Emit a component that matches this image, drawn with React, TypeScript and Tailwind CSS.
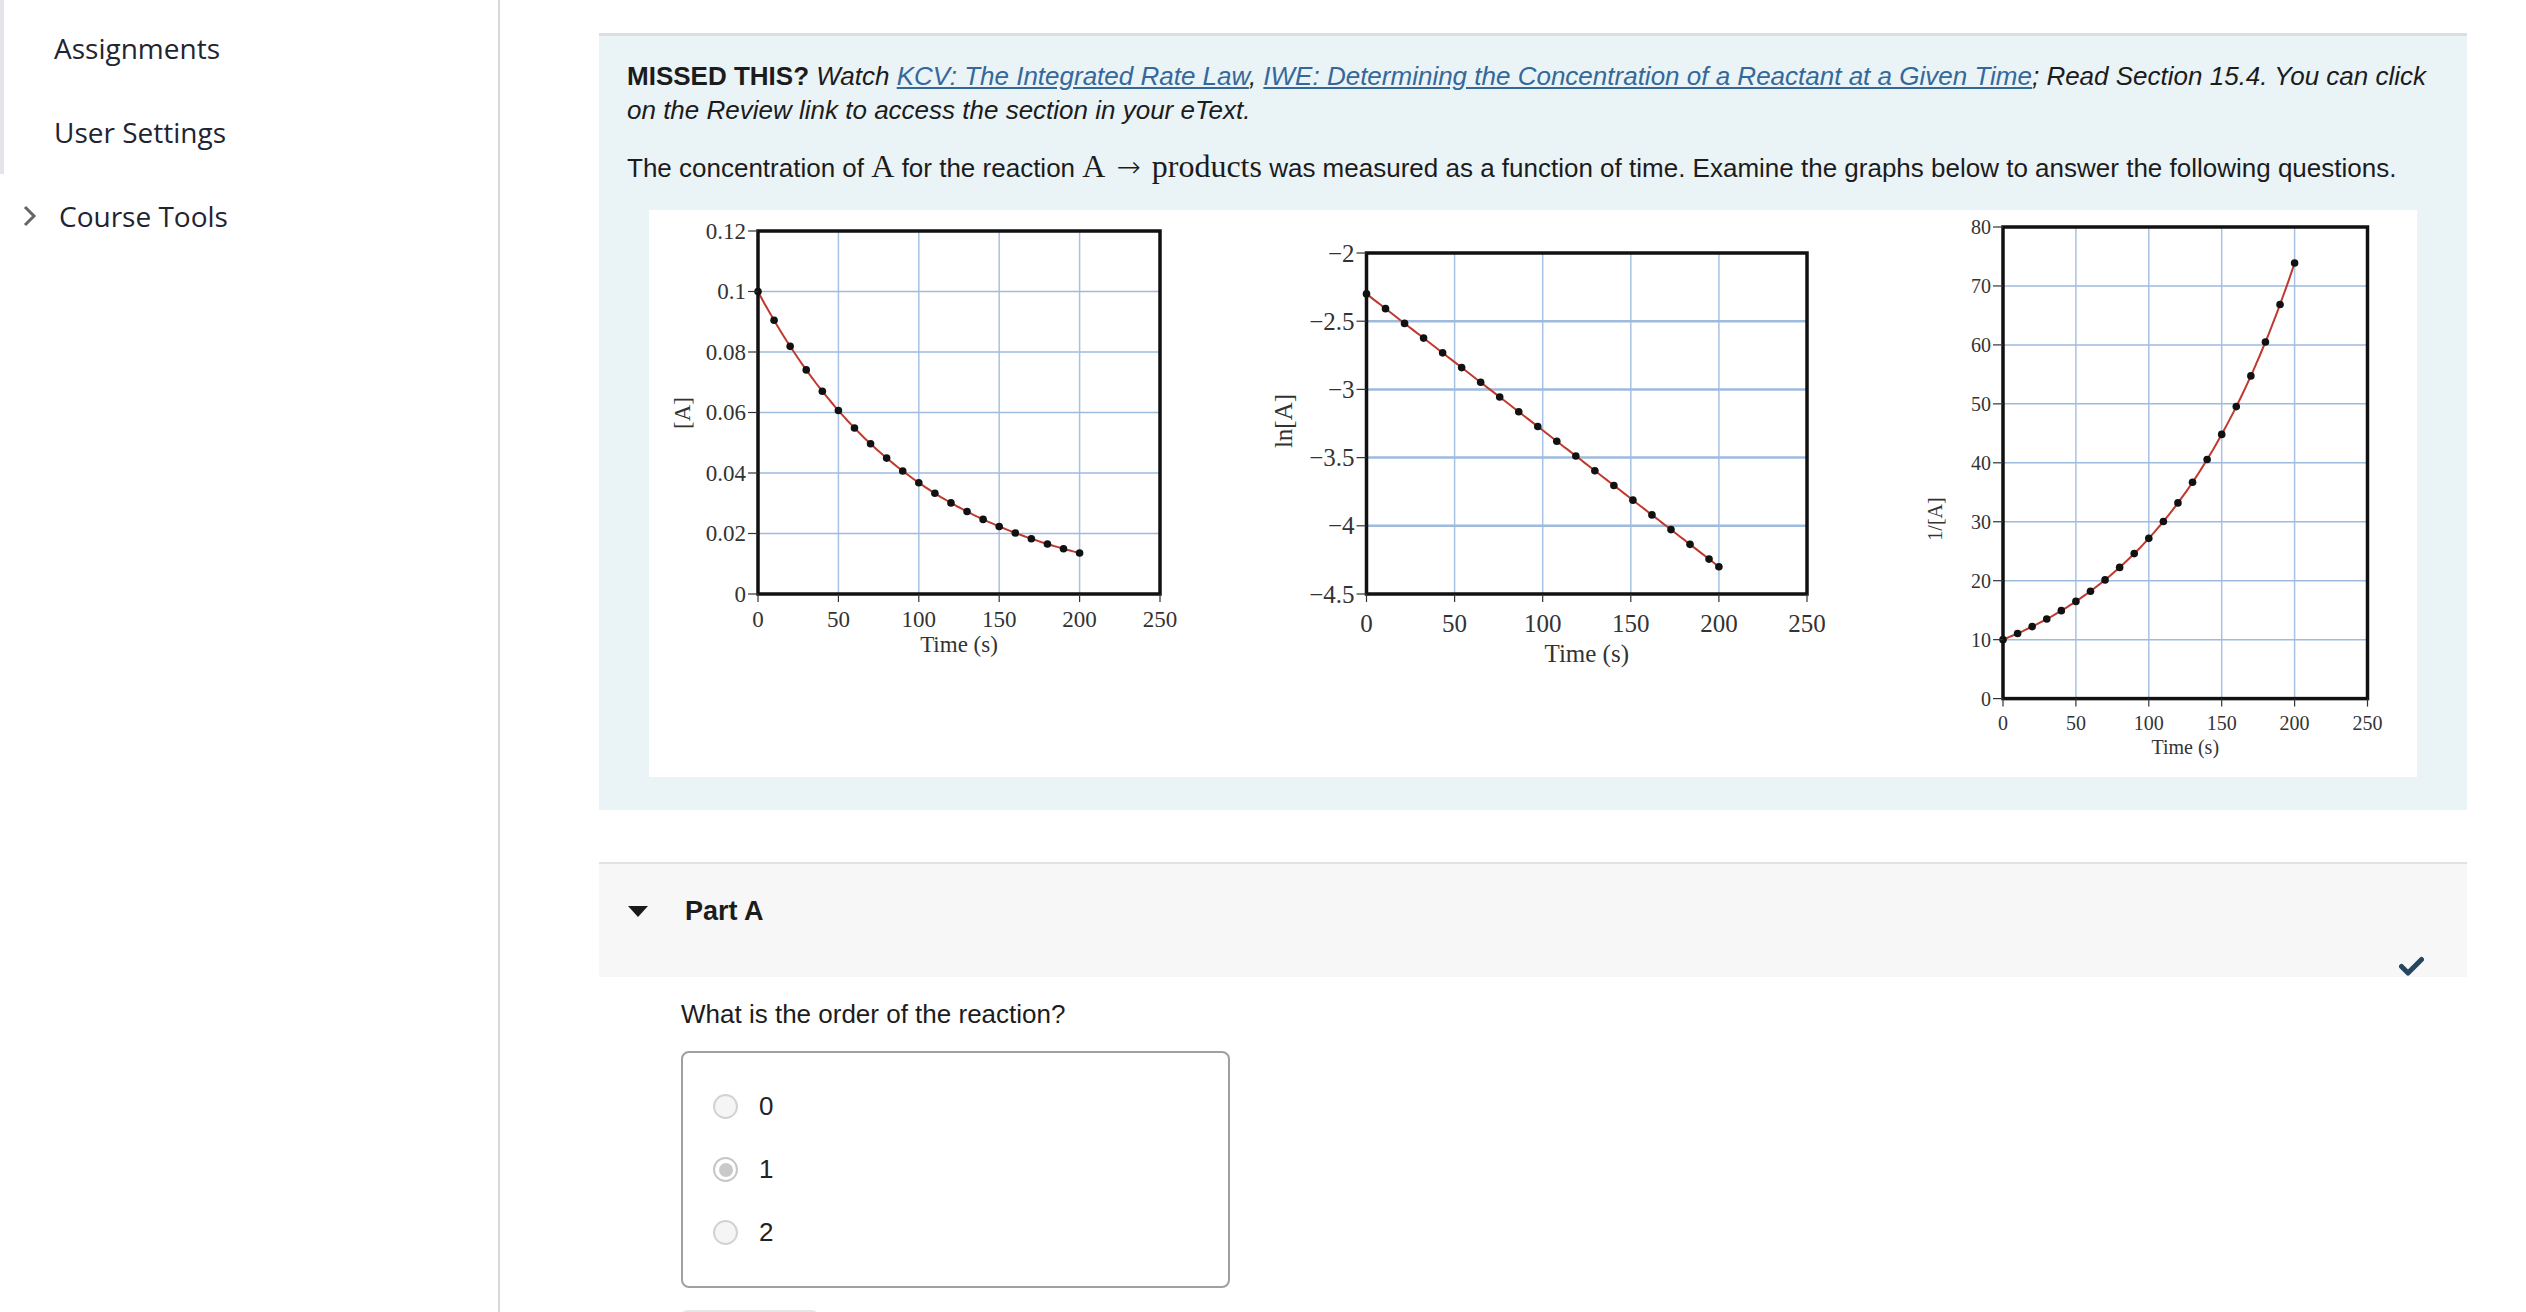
import React from "react";

interface Tick {
  v: number;
  s: string;
}

interface GraphProps {
  w: number;
  h: number;
  l: number;
  r: number;
  t: number;
  b: number;
  ymin: number;
  ymax: number;
  yticks: Tick[];
  pts: number[];
  f: (t: number) => number;
  fs: number;
  ylabel: string;
  ylx: number;
  yly: number;
  xly: number;
  tly: number;
  hgrid: number;
}

const serif = "'Liberation Serif', 'Times New Roman', serif";

function Graph(g: GraphProps) {
  const sx = (t: number) => g.l + (t / 250) * (g.r - g.l);
  const sy = (v: number) => g.b - ((v - g.ymin) / (g.ymax - g.ymin)) * (g.b - g.t);

  // smooth curve through the model function
  const curve: string[] = [];
  for (let t = 0; t <= 200; t += 2) curve.push(`${sx(t).toFixed(1)},${sy(g.f(t)).toFixed(1)}`);

  return (
    <svg width={g.w} height={g.h} className="shrink-0" style={{ fontFamily: serif }}>
      {[50, 100, 150, 200].map((t) => (
        <line key={t} x1={sx(t)} x2={sx(t)} y1={g.t} y2={g.b} stroke="#a7c2e2" strokeWidth={1.5} />
      ))}
      {g.yticks.slice(1, -1).map((k) => (
        <line key={k.s} x1={g.l} x2={g.r} y1={sy(k.v)} y2={sy(k.v)} stroke="#9ebbde" strokeWidth={g.hgrid} />
      ))}
      <polyline points={curve.join(" ")} fill="none" stroke="#c0392f" strokeWidth={2} />
      {g.pts.map((t, i) => (
        <circle key={i} cx={sx(t)} cy={sy(g.f(t))} r={3.8} fill="#111" />
      ))}
      <rect x={g.l} y={g.t} width={g.r - g.l} height={g.b - g.t} fill="none" stroke="#111" strokeWidth={3.5} />
      {g.yticks.map((k) => (
        <g key={k.s}>
          <line x1={g.l - 10} x2={g.l} y1={sy(k.v)} y2={sy(k.v)} stroke="#333" strokeWidth={1.2} />
          <text x={g.l - 12} y={sy(k.v)} fontSize={g.fs} textAnchor="end" dominantBaseline="central" fill="#333">
            {k.s}
          </text>
        </g>
      ))}
      {[0, 50, 100, 150, 200, 250].map((t) => (
        <g key={t}>
          <line x1={sx(t)} x2={sx(t)} y1={g.b} y2={g.b + 8} stroke="#333" strokeWidth={1.2} />
          <text x={sx(t)} y={g.xly} fontSize={g.fs} textAnchor="middle" dominantBaseline="central" fill="#333">
            {t}
          </text>
        </g>
      ))}
      <text x={(g.l + g.r) / 2} y={g.tly} fontSize={g.fs} textAnchor="middle" dominantBaseline="central" fill="#333">
        Time (s)
      </text>
      <text
        x={g.ylx}
        y={g.yly}
        fontSize={g.fs}
        textAnchor="middle"
        dominantBaseline="central"
        fill="#333"
        transform={`rotate(-90 ${g.ylx} ${g.yly})`}
      >
        {g.ylabel}
      </text>
    </svg>
  );
}

const every10 = Array.from({ length: 21 }, (_, i) => i * 10);
const lnPts = [...Array.from({ length: 19 }, (_, i) => i * 10.8), 200];

function Radio({ label, checked }: { label: string; checked?: boolean }) {
  return (
    <div className="flex h-[63px] items-center">
      {checked ? (
        <span className="flex h-[25px] w-[25px] items-center justify-center rounded-full border-2 border-[#c6c6c6] bg-white">
          <span className="h-[14px] w-[14px] rounded-full bg-[#c9c9c9]" />
        </span>
      ) : (
        <span className="h-[25px] w-[25px] rounded-full border-2 border-[#d2d2d2] bg-[#f5f5f5]" />
      )}
      <span className="ml-[21px] text-[26px] text-[#222]">{label}</span>
    </div>
  );
}

export default function App() {
  return (
    <div
      className="flex h-[1312px] w-[2526px] overflow-hidden bg-white"
      style={{ fontFamily: "'Liberation Sans', Arial, sans-serif" }}
    >
      {/* side nav */}
      <aside
        className="w-[500px] shrink-0 border-r-2 border-[#d8d8d8] text-[28px] text-[#1f2430]"
        style={{ fontFamily: "'Open Sans', 'Noto Sans', sans-serif" }}
      >
        <div className="border-l-4 border-[#e4e5e8] pt-[6px]">
          <div className="flex h-[84px] items-center pl-[50px]">Assignments</div>
          <div className="flex h-[84px] items-center pl-[50px]">User Settings</div>
        </div>
        <div className="flex h-[84px] items-center pl-[22px]">
          <svg width="16" height="22" viewBox="0 0 16 22" className="mr-[21px]">
            <path d="M3 2 L12 11 L3 20" fill="none" stroke="#666" strokeWidth="3" />
          </svg>
          Course Tools
        </div>
      </aside>

      {/* main */}
      <main className="flex-1 pl-[99px] pr-[59px] text-[#1c1c1c]">
        <section className="mt-[33px] border-t-[3px] border-[#dcdfe0] bg-[#eaf3f6] px-[28px] pt-[23px] pb-[33px]">
          <p className="text-[26px] leading-[34px]">
            <b>MISSED THIS?</b>{" "}
            <i>
              Watch{" "}
              <a className="text-[#35689a] underline">KCV: The Integrated Rate Law</a>,{" "}
              <a className="text-[#35689a] underline">
                IWE: Determining the Concentration of a Reactant at a Given Time
              </a>
              ; Read Section 15.4. You can click on the Review link to access the section in your eText.
            </i>
          </p>
          <p className="mt-[23px] h-[34px] text-[26px] leading-[34px]">
            The concentration of{" "}
            <span style={{ fontFamily: serif }} className="text-[32px] leading-none">
              A
            </span>{" "}
            for the reaction{" "}
            <span style={{ fontFamily: serif }} className="text-[32px] leading-none">
              A
            </span>
            <span
              style={{ fontFamily: "'DejaVu Sans', sans-serif" }}
              className="mx-[11px] text-[29px] font-light leading-none"
            >
              →
            </span>
            <span style={{ fontFamily: serif }} className="text-[32px] leading-none">
              products
            </span>{" "}
            was measured as a function of time. Examine the graphs below to answer the following questions.
          </p>

          <div className="mx-[22px] mt-[26px] flex h-[567px] bg-white">
            <Graph
              w={580}
              h={567}
              l={109}
              r={511}
              t={21}
              b={384}
              ymin={0}
              ymax={0.12}
              yticks={[
                { v: 0, s: "0" },
                { v: 0.02, s: "0.02" },
                { v: 0.04, s: "0.04" },
                { v: 0.06, s: "0.06" },
                { v: 0.08, s: "0.08" },
                { v: 0.1, s: "0.1" },
                { v: 0.12, s: "0.12" },
              ]}
              pts={every10}
              f={(t) => 0.1 * Math.exp(-0.01 * t)}
              fs={23}
              ylabel="[A]"
              ylx={33}
              yly={203}
              xly={409}
              tly={434}
              hgrid={1.5}
            />
            <Graph
              w={640}
              h={567}
              l={137.5}
              r={578}
              t={43}
              b={384}
              ymin={-4.5}
              ymax={-2}
              yticks={[
                { v: -4.5, s: "−4.5" },
                { v: -4, s: "−4" },
                { v: -3.5, s: "−3.5" },
                { v: -3, s: "−3" },
                { v: -2.5, s: "−2.5" },
                { v: -2, s: "−2" },
              ]}
              pts={lnPts}
              f={(t) => -2.3 - 0.01 * t}
              fs={25}
              ylabel="ln[A]"
              ylx={54}
              yly={211}
              xly={413}
              tly={443}
              hgrid={2.5}
            />
            <Graph
              w={548}
              h={567}
              l={134}
              r={498.5}
              t={17}
              b={488.6}
              ymin={0}
              ymax={80}
              yticks={[0, 10, 20, 30, 40, 50, 60, 70, 80].map((v) => ({ v, s: String(v) }))}
              pts={every10}
              f={(t) => 10 * Math.exp(0.01 * t)}
              fs={20}
              ylabel="1/[A]"
              ylx={66}
              yly={309}
              xly={513}
              tly={537}
              hgrid={1.5}
            />
          </div>
        </section>

        {/* Part A */}
        <section className="relative mt-[52px] h-[115px] border-t-2 border-[#e2e2e2] bg-[#f7f7f7] pl-[29px] pt-[30px]">
          <div className="flex h-[34px] items-center">
            <svg width="20" height="11" viewBox="0 0 20 11">
              <polygon points="0,0 20,0 10,11" fill="#1a1a1a" />
            </svg>
            <span className="ml-[37px] text-[27px] font-bold">Part A</span>
          </div>
          <svg width="25" height="20" viewBox="0 0 25 20" className="absolute right-[43px] top-[92px]">
            <path d="M2.5 10.5 L9 17 L22.5 3.5" fill="none" stroke="#24475f" strokeWidth="5" strokeLinecap="round" strokeLinejoin="round" />
          </svg>
        </section>

        <div className="pl-[82px]">
          <p className="mt-[20px] text-[26px] leading-[34px]">What is the order of the reaction?</p>
          <div className="mt-[20px] w-[549px] rounded-[8px] border-2 border-[#a0a0a0] py-[22px] pl-[30px]">
            <Radio label="0" />
            <Radio label="1" checked />
            <Radio label="2" />
          </div>
          <div className="mt-[22px] h-[40px] w-[137px] rounded-[6px] border-2 border-[#e6e6e6] bg-[#f4f4f4]" />
        </div>
      </main>
    </div>
  );
}
